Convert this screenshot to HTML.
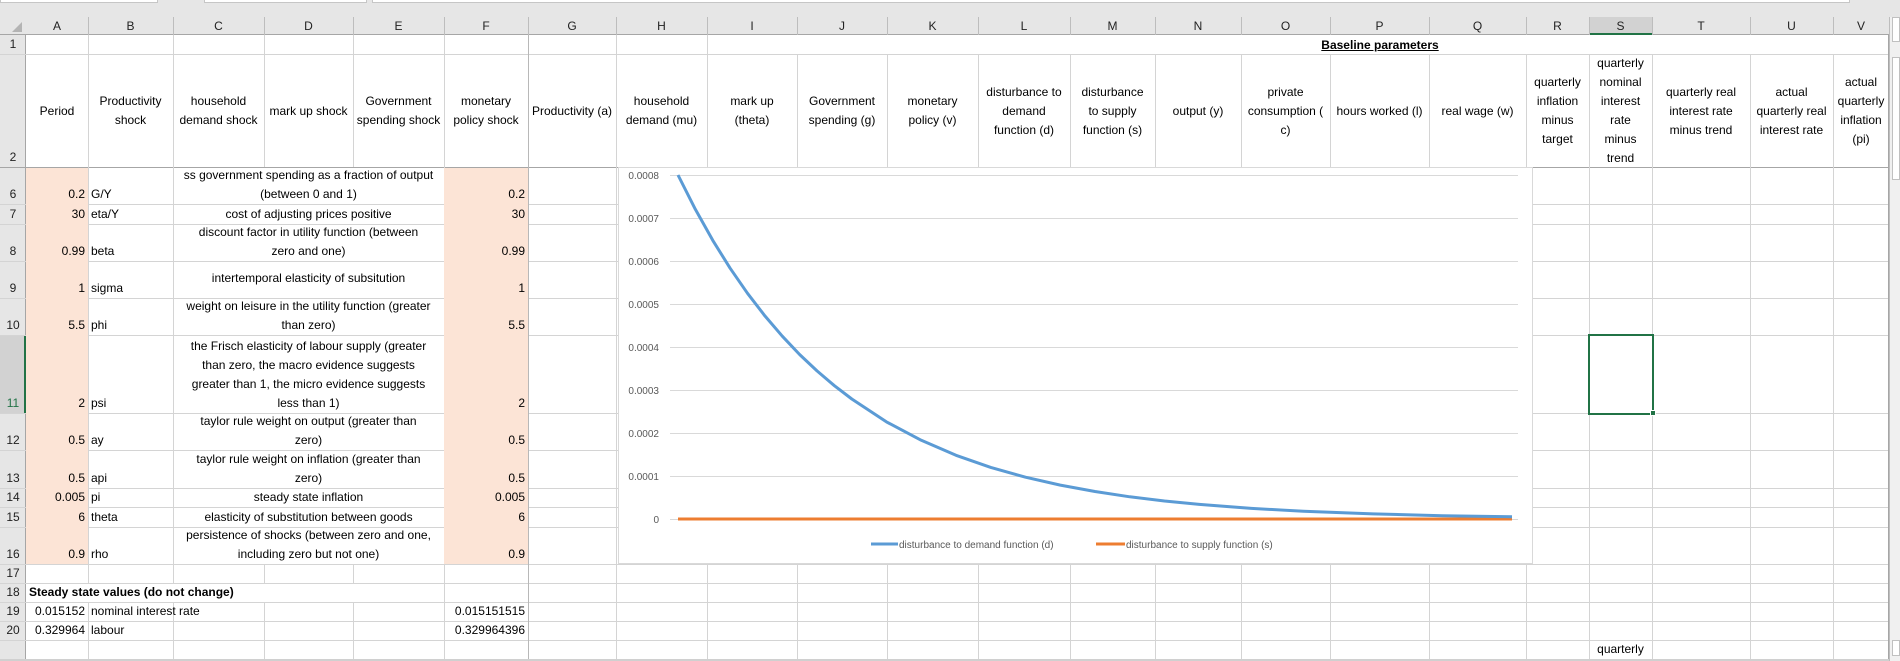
<!DOCTYPE html>
<html><head><meta charset="utf-8"><style>
*{margin:0;padding:0;box-sizing:border-box}
body{width:1900px;height:661px;overflow:hidden;background:#fff;position:relative;font-family:"Liberation Sans",Arial,sans-serif;font-size:12px;color:#000}
.a{position:absolute}
.h{position:absolute;height:1px;background:#d4d4d4}
.v{position:absolute;width:1px;background:#d4d4d4}
.c{position:absolute;display:flex;line-height:19px;white-space:nowrap;overflow:visible}
.m{justify-content:center;align-items:center;text-align:center}
.b{align-items:flex-end;padding-bottom:0}
.r{justify-content:flex-end;padding-right:3px}
.l{justify-content:flex-start;padding-left:3px}
.ctr{justify-content:center;text-align:center}
.ch{position:absolute;top:17px;height:18px;display:flex;align-items:center;justify-content:center;color:#222;font-size:12px}
.rh{position:absolute;left:0;width:26px;display:flex;align-items:flex-end;justify-content:center;font-size:12px;color:#222;line-height:19px}
</style></head><body>
<!-- top strip -->
<div class="a" style="left:0;top:0;width:1900px;height:17px;background:#e6e6e6"></div>
<div class="a" style="left:0;top:0;width:158px;height:3px;background:#fff;border:1px solid #c6c6c6;border-top:none"></div>
<div class="a" style="left:204px;top:0;width:163px;height:3px;background:#fff;border:1px solid #c6c6c6;border-top:none"></div>
<div class="a" style="left:372px;top:0;width:1478px;height:3px;background:#fff;border:1px solid #c6c6c6;border-top:none"></div>
<!-- column header bar -->
<div class="a" style="left:0;top:17px;width:1889px;height:18px;background:#e6e6e6;border-bottom:1px solid #a6a6a6"></div>
<div class="a" style="left:1589px;top:17px;width:63px;height:18px;background:#d2d2d2;border-bottom:2px solid #217346"></div>
<!-- row header column -->
<div class="a" style="left:0;top:35px;width:26px;height:624px;background:#e6e6e6;border-right:1px solid #a6a6a6"></div>
<div class="a" style="left:0;top:335px;width:26px;height:78px;background:#d2d2d2;border-right:2px solid #217346"></div>
<!-- corner triangle -->
<div class="a" style="left:12px;top:22px;width:0;height:0;border-left:10px solid transparent;border-bottom:10px solid #b4b4b4"></div>
<!-- scrollbar -->
<div class="a" style="left:1889px;top:17px;width:11px;height:644px;background:#f0f0f0;border-left:1px solid #bdbdbd"></div>
<div class="a" style="left:1892px;top:17px;width:8px;height:25px;background:#fff;border:1px solid #c0c0c0"></div>
<div class="a" style="left:1892px;top:57px;width:8px;height:123px;background:#fff;border:1px solid #c0c0c0"></div>
<div class="a" style="left:1892px;top:640px;width:8px;height:16px;background:#fff;border:1px solid #c0c0c0"></div>
<div class="a" style="left:0;top:659px;width:1889px;height:2px;background:#d0d0d0"></div>

<!-- column header separators & letters -->
<div class="v" style="left:88px;top:17px;height:18px;background:#bdbdbd"></div>
<div class="v" style="left:173px;top:17px;height:18px;background:#bdbdbd"></div>
<div class="v" style="left:264px;top:17px;height:18px;background:#bdbdbd"></div>
<div class="v" style="left:353px;top:17px;height:18px;background:#bdbdbd"></div>
<div class="v" style="left:444px;top:17px;height:18px;background:#bdbdbd"></div>
<div class="v" style="left:528px;top:17px;height:18px;background:#bdbdbd"></div>
<div class="v" style="left:616px;top:17px;height:18px;background:#bdbdbd"></div>
<div class="v" style="left:707px;top:17px;height:18px;background:#bdbdbd"></div>
<div class="v" style="left:797px;top:17px;height:18px;background:#bdbdbd"></div>
<div class="v" style="left:887px;top:17px;height:18px;background:#bdbdbd"></div>
<div class="v" style="left:978px;top:17px;height:18px;background:#bdbdbd"></div>
<div class="v" style="left:1070px;top:17px;height:18px;background:#bdbdbd"></div>
<div class="v" style="left:1155px;top:17px;height:18px;background:#bdbdbd"></div>
<div class="v" style="left:1241px;top:17px;height:18px;background:#bdbdbd"></div>
<div class="v" style="left:1330px;top:17px;height:18px;background:#bdbdbd"></div>
<div class="v" style="left:1429px;top:17px;height:18px;background:#bdbdbd"></div>
<div class="v" style="left:1526px;top:17px;height:18px;background:#bdbdbd"></div>
<div class="v" style="left:1589px;top:17px;height:18px;background:#bdbdbd"></div>
<div class="v" style="left:1652px;top:17px;height:18px;background:#bdbdbd"></div>
<div class="v" style="left:1750px;top:17px;height:18px;background:#bdbdbd"></div>
<div class="v" style="left:1833px;top:17px;height:18px;background:#bdbdbd"></div>
<div class="ch" style="left:26px;width:62px">A</div>
<div class="ch" style="left:88px;width:85px">B</div>
<div class="ch" style="left:173px;width:91px">C</div>
<div class="ch" style="left:264px;width:89px">D</div>
<div class="ch" style="left:353px;width:91px">E</div>
<div class="ch" style="left:444px;width:84px">F</div>
<div class="ch" style="left:528px;width:88px">G</div>
<div class="ch" style="left:616px;width:91px">H</div>
<div class="ch" style="left:707px;width:90px">I</div>
<div class="ch" style="left:797px;width:90px">J</div>
<div class="ch" style="left:887px;width:91px">K</div>
<div class="ch" style="left:978px;width:92px">L</div>
<div class="ch" style="left:1070px;width:85px">M</div>
<div class="ch" style="left:1155px;width:86px">N</div>
<div class="ch" style="left:1241px;width:89px">O</div>
<div class="ch" style="left:1330px;width:99px">P</div>
<div class="ch" style="left:1429px;width:97px">Q</div>
<div class="ch" style="left:1526px;width:63px">R</div>
<div class="ch" style="left:1589px;width:63px">S</div>
<div class="ch" style="left:1652px;width:98px">T</div>
<div class="ch" style="left:1750px;width:83px">U</div>
<div class="ch" style="left:1833px;width:56px">V</div>

<!-- horizontal grid lines -->
<div class="h" style="left:0;top:54px;width:1889px"></div>
<div class="h" style="left:0;top:167px;width:1889px;background:#a6a6a6"></div>
<div class="h" style="left:0;top:204px;width:1889px"></div>
<div class="h" style="left:0;top:224px;width:1889px"></div>
<div class="h" style="left:0;top:261px;width:1889px"></div>
<div class="h" style="left:0;top:298px;width:1889px"></div>
<div class="h" style="left:0;top:335px;width:1889px"></div>
<div class="h" style="left:0;top:413px;width:1889px"></div>
<div class="h" style="left:0;top:450px;width:1889px"></div>
<div class="h" style="left:0;top:488px;width:1889px"></div>
<div class="h" style="left:0;top:507px;width:1889px"></div>
<div class="h" style="left:0;top:527px;width:1889px"></div>
<div class="h" style="left:0;top:564px;width:1889px"></div>
<div class="h" style="left:0;top:583px;width:1889px"></div>
<div class="h" style="left:0;top:602px;width:1889px"></div>
<div class="h" style="left:0;top:621px;width:1889px"></div>
<div class="h" style="left:0;top:640px;width:1889px"></div>

<!-- vertical grid lines -->
<div class="v" style="left:88px;top:35px;height:624px"></div>
<div class="v" style="left:173px;top:35px;height:624px"></div>
<div class="v" style="left:264px;top:35px;height:132px"></div>
<div class="v" style="left:264px;top:564px;height:95px"></div>
<div class="v" style="left:353px;top:35px;height:132px"></div>
<div class="v" style="left:353px;top:564px;height:95px"></div>
<div class="v" style="left:444px;top:35px;height:624px"></div>
<div class="v" style="left:528px;top:35px;height:624px;background:#b8b8b8"></div>
<div class="v" style="left:616px;top:35px;height:624px"></div>
<div class="v" style="left:707px;top:35px;height:624px"></div>
<div class="v" style="left:797px;top:54px;height:605px"></div>
<div class="v" style="left:887px;top:54px;height:605px"></div>
<div class="v" style="left:978px;top:54px;height:605px"></div>
<div class="v" style="left:1070px;top:54px;height:605px"></div>
<div class="v" style="left:1155px;top:54px;height:605px"></div>
<div class="v" style="left:1241px;top:54px;height:605px"></div>
<div class="v" style="left:1330px;top:54px;height:605px"></div>
<div class="v" style="left:1429px;top:54px;height:605px"></div>
<div class="v" style="left:1526px;top:54px;height:605px"></div>
<div class="v" style="left:1589px;top:54px;height:605px"></div>
<div class="v" style="left:1652px;top:54px;height:605px"></div>
<div class="v" style="left:1750px;top:54px;height:605px"></div>
<div class="v" style="left:1833px;top:54px;height:605px"></div>
<div class="v" style="left:1888px;top:35px;height:624px;background:#a6a6a6"></div>

<!-- pink fills -->
<div class="a" style="left:26px;top:168px;width:62px;height:396px;background:#fce4d6"></div>
<div class="a" style="left:444px;top:168px;width:84px;height:396px;background:#fce4d6"></div>

<!-- row headers -->
<div class="rh" style="top:35px;height:19px">1</div>
<div class="rh" style="top:54px;height:113px">2</div>
<div class="rh" style="top:167px;height:37px">6</div>
<div class="rh" style="top:204px;height:20px">7</div>
<div class="rh" style="top:224px;height:37px">8</div>
<div class="rh" style="top:261px;height:37px">9</div>
<div class="rh" style="top:298px;height:37px">10</div>
<div class="rh" style="top:335px;height:78px;color:#217346">11</div>
<div class="rh" style="top:413px;height:37px">12</div>
<div class="rh" style="top:450px;height:38px">13</div>
<div class="rh" style="top:488px;height:19px">14</div>
<div class="rh" style="top:507px;height:20px">15</div>
<div class="rh" style="top:527px;height:37px">16</div>
<div class="rh" style="top:564px;height:19px">17</div>
<div class="rh" style="top:583px;height:19px">18</div>
<div class="rh" style="top:602px;height:19px">19</div>
<div class="rh" style="top:621px;height:19px">20</div>

<!-- row 1 -->
<div class="c m" style="left:1300px;top:36px;width:160px;height:19px;font-weight:bold;text-decoration:underline">Baseline parameters</div>

<!-- row 2 headers -->
<div class="c m" style="left:26px;top:55px;width:62px;height:112px">Period</div>
<div class="c m" style="left:88px;top:55px;width:85px;height:112px">Productivity<br>shock</div>
<div class="c m" style="left:173px;top:55px;width:91px;height:112px">household<br>demand shock</div>
<div class="c m" style="left:264px;top:55px;width:89px;height:112px">mark up shock</div>
<div class="c m" style="left:353px;top:55px;width:91px;height:112px">Government<br>spending shock</div>
<div class="c m" style="left:444px;top:55px;width:84px;height:112px">monetary<br>policy shock</div>
<div class="c m" style="left:528px;top:55px;width:88px;height:112px">Productivity (a)</div>
<div class="c m" style="left:616px;top:55px;width:91px;height:112px">household<br>demand (mu)</div>
<div class="c m" style="left:707px;top:55px;width:90px;height:112px">mark up<br>(theta)</div>
<div class="c m" style="left:797px;top:55px;width:90px;height:112px">Government<br>spending (g)</div>
<div class="c m" style="left:887px;top:55px;width:91px;height:112px">monetary<br>policy (v)</div>
<div class="c m" style="left:978px;top:55px;width:92px;height:112px">disturbance to<br>demand<br>function (d)</div>
<div class="c m" style="left:1070px;top:55px;width:85px;height:112px">disturbance<br>to supply<br>function (s)</div>
<div class="c m" style="left:1155px;top:55px;width:86px;height:112px">output (y)</div>
<div class="c m" style="left:1241px;top:55px;width:89px;height:112px">private<br>consumption (<br>c)</div>
<div class="c m" style="left:1330px;top:55px;width:99px;height:112px">hours worked (l)</div>
<div class="c m" style="left:1429px;top:55px;width:97px;height:112px">real wage (w)</div>
<div class="c m" style="left:1526px;top:55px;width:63px;height:112px">quarterly<br>inflation<br>minus<br>target</div>
<div class="c m" style="left:1589px;top:55px;width:63px;height:112px">quarterly<br>nominal<br>interest<br>rate<br>minus<br>trend</div>
<div class="c m" style="left:1652px;top:55px;width:98px;height:112px">quarterly real<br>interest rate<br>minus trend</div>
<div class="c m" style="left:1750px;top:55px;width:83px;height:112px">actual<br>quarterly real<br>interest rate</div>
<div class="c m" style="left:1833px;top:55px;width:56px;height:112px;overflow:hidden">actual<br>quarterly<br>inflation<br>(pi)</div>

<!-- parameter rows -->
<div class="c b r" style="left:26px;top:167px;width:62px;height:37px">0.2</div>
<div class="c b l" style="left:88px;top:167px;width:85px;height:37px">G/Y</div>
<div class="c b ctr" style="left:173px;top:167px;width:271px;height:37px">ss government spending as a fraction of output<br>(between 0 and 1)</div>
<div class="c b r" style="left:444px;top:167px;width:84px;height:37px">0.2</div>

<div class="c b r" style="left:26px;top:204px;width:62px;height:20px">30</div>
<div class="c b l" style="left:88px;top:204px;width:85px;height:20px">eta/Y</div>
<div class="c b ctr" style="left:173px;top:204px;width:271px;height:20px">cost of adjusting prices positive</div>
<div class="c b r" style="left:444px;top:204px;width:84px;height:20px">30</div>

<div class="c b r" style="left:26px;top:224px;width:62px;height:37px">0.99</div>
<div class="c b l" style="left:88px;top:224px;width:85px;height:37px">beta</div>
<div class="c b ctr" style="left:173px;top:224px;width:271px;height:37px">discount factor in utility function (between<br>zero and one)</div>
<div class="c b r" style="left:444px;top:224px;width:84px;height:37px">0.99</div>

<div class="c b r" style="left:26px;top:261px;width:62px;height:37px">1</div>
<div class="c b l" style="left:88px;top:261px;width:85px;height:37px">sigma</div>
<div class="c b ctr" style="left:173px;top:261px;width:271px;height:37px;padding-bottom:10px">intertemporal elasticity of subsitution</div>
<div class="c b r" style="left:444px;top:261px;width:84px;height:37px">1</div>

<div class="c b r" style="left:26px;top:298px;width:62px;height:37px">5.5</div>
<div class="c b l" style="left:88px;top:298px;width:85px;height:37px">phi</div>
<div class="c b ctr" style="left:173px;top:298px;width:271px;height:37px">weight on leisure in the utility function (greater<br>than zero)</div>
<div class="c b r" style="left:444px;top:298px;width:84px;height:37px">5.5</div>

<div class="c b r" style="left:26px;top:335px;width:62px;height:78px">2</div>
<div class="c b l" style="left:88px;top:335px;width:85px;height:78px">psi</div>
<div class="c b ctr" style="left:173px;top:335px;width:271px;height:78px">the Frisch elasticity of labour supply (greater<br>than zero, the macro evidence suggests<br>greater than 1, the micro evidence suggests<br>less than 1)</div>
<div class="c b r" style="left:444px;top:335px;width:84px;height:78px">2</div>

<div class="c b r" style="left:26px;top:413px;width:62px;height:37px">0.5</div>
<div class="c b l" style="left:88px;top:413px;width:85px;height:37px">ay</div>
<div class="c b ctr" style="left:173px;top:413px;width:271px;height:37px">taylor rule weight on output (greater than<br>zero)</div>
<div class="c b r" style="left:444px;top:413px;width:84px;height:37px">0.5</div>

<div class="c b r" style="left:26px;top:450px;width:62px;height:38px">0.5</div>
<div class="c b l" style="left:88px;top:450px;width:85px;height:38px">api</div>
<div class="c b ctr" style="left:173px;top:450px;width:271px;height:38px">taylor rule weight on inflation (greater than<br>zero)</div>
<div class="c b r" style="left:444px;top:450px;width:84px;height:38px">0.5</div>

<div class="c b r" style="left:26px;top:488px;width:62px;height:19px">0.005</div>
<div class="c b l" style="left:88px;top:488px;width:85px;height:19px">pi</div>
<div class="c b ctr" style="left:173px;top:488px;width:271px;height:19px">steady state inflation</div>
<div class="c b r" style="left:444px;top:488px;width:84px;height:19px">0.005</div>

<div class="c b r" style="left:26px;top:507px;width:62px;height:20px">6</div>
<div class="c b l" style="left:88px;top:507px;width:85px;height:20px">theta</div>
<div class="c b ctr" style="left:173px;top:507px;width:271px;height:20px">elasticity of substitution between goods</div>
<div class="c b r" style="left:444px;top:507px;width:84px;height:20px">6</div>

<div class="c b r" style="left:26px;top:527px;width:62px;height:37px">0.9</div>
<div class="c b l" style="left:88px;top:527px;width:85px;height:37px">rho</div>
<div class="c b ctr" style="left:173px;top:527px;width:271px;height:37px">persistence of shocks (between zero and one,<br>including zero but not one)</div>
<div class="c b r" style="left:444px;top:527px;width:84px;height:37px">0.9</div>

<div class="a" style="left:27px;top:584px;width:330px;height:18px;background:#fff"></div>
<div class="c b l" style="left:26px;top:583px;width:320px;height:19px;font-weight:bold">Steady state values (do not change)</div>
<div class="c b r" style="left:26px;top:602px;width:62px;height:19px">0.015152</div>
<div class="c b l" style="left:88px;top:602px;width:150px;height:19px">nominal interest rate</div>
<div class="c b r" style="left:444px;top:602px;width:84px;height:19px">0.015151515</div>
<div class="c b r" style="left:26px;top:621px;width:62px;height:19px">0.329964</div>
<div class="c b l" style="left:88px;top:621px;width:85px;height:19px">labour</div>
<div class="c b r" style="left:444px;top:621px;width:84px;height:19px">0.329964396</div>
<div class="c b ctr" style="left:1589px;top:640px;width:63px;height:19px">quarterly</div>

<!-- chart -->
<svg class="a" style="left:618px;top:167px" width="915" height="397" viewBox="0 0 915 397">
<rect x="0.5" y="0.5" width="914" height="396" fill="#fff" stroke="#d9d9d9"/>
<g stroke="#d9d9d9" stroke-width="1">
<line x1="52" x2="900" y1="8.5" y2="8.5"/>
<line x1="52" x2="900" y1="51.5" y2="51.5"/>
<line x1="52" x2="900" y1="94.5" y2="94.5"/>
<line x1="52" x2="900" y1="137.5" y2="137.5"/>
<line x1="52" x2="900" y1="180.5" y2="180.5"/>
<line x1="52" x2="900" y1="223.5" y2="223.5"/>
<line x1="52" x2="900" y1="266.5" y2="266.5"/>
<line x1="52" x2="900" y1="309.5" y2="309.5"/>
<line x1="52" x2="900" y1="352.5" y2="352.5"/>
</g>
<g font-family="Liberation Sans, Arial, sans-serif" font-size="10" fill="#595959" text-anchor="end">
<text x="41" y="12">0.0008</text>
<text x="41" y="55">0.0007</text>
<text x="41" y="98">0.0006</text>
<text x="41" y="141">0.0005</text>
<text x="41" y="184">0.0004</text>
<text x="41" y="227">0.0003</text>
<text x="41" y="270">0.0002</text>
<text x="41" y="313">0.0001</text>
<text x="41" y="356">0</text>
</g>
<line x1="60" x2="894" y1="352" y2="352" stroke="#ed7d31" stroke-width="3"/>
<polyline fill="none" stroke="#5b9bd5" stroke-width="3" stroke-linejoin="round" points="60,8 77.4,42.4 94.8,73.4 112.1,101.2 129.5,126.3 146.9,148.9 164.3,169.2 181.6,187.5 199,203.9 216.4,218.7 233.8,232 268.5,254.9 303.3,273.3 338,288.3 372.8,300.4 407.5,310.2 442.3,318.1 477,324.5 511.8,329.8 546.5,334 581.3,337.4 633.4,341.4 685.5,344.3 755,346.9 824.5,348.7 894,349.8"/>
<line x1="253" x2="280" y1="377" y2="377" stroke="#5b9bd5" stroke-width="3"/>
<text x="281" y="381" font-family="Liberation Sans, Arial, sans-serif" font-size="10" fill="#595959">disturbance to demand function (d)</text>
<line x1="478" x2="507" y1="377" y2="377" stroke="#ed7d31" stroke-width="3"/>
<text x="508" y="381" font-family="Liberation Sans, Arial, sans-serif" font-size="10" fill="#595959">disturbance to supply function (s)</text>
</svg>

<!-- selected cell -->
<div class="a" style="left:1588px;top:334px;width:66px;height:81px;border:2px solid #217346"></div>
<div class="a" style="left:1650px;top:410px;width:6px;height:6px;background:#217346;border:1px solid #fff"></div>
</body></html>
